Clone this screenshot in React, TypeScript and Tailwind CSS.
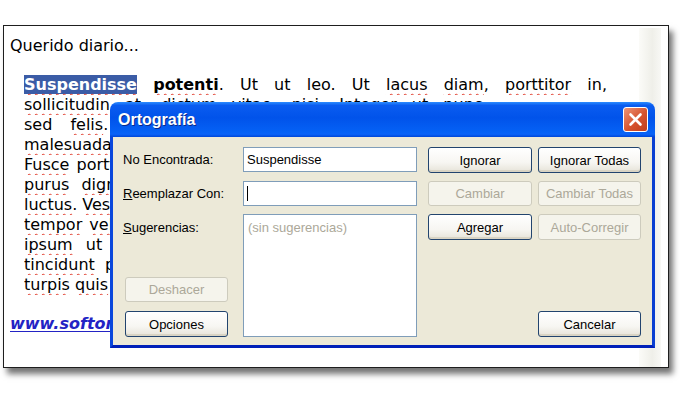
import React from "react";

const sq = "underline decoration-wavy decoration-[#e03a2a] decoration-1 underline-offset-[3px]";

function Line({
  children,
  justify = false,
  className = "",
}: {
  children: React.ReactNode;
  justify?: boolean;
  className?: string;
}) {
  return (
    <div
      className={
        "h-[20px] leading-[20px] overflow-hidden whitespace-nowrap " +
        (justify ? "text-justify [text-align-last:justify] whitespace-normal " : "") +
        className
      }
    >
      {children}
    </div>
  );
}

function XPButton({
  children,
  disabled = false,
  className = "",
}: {
  children: React.ReactNode;
  disabled?: boolean;
  className?: string;
}) {
  return (
    <div
      className={
        "flex items-center justify-center rounded-[3px] border text-[13px] leading-none " +
        (disabled
          ? "border-[#cdcbbd] bg-[#f5f4ec] text-[#aca899] "
          : "border-[#22446e] bg-[linear-gradient(#ffffff,#f7f6f2_60%,#e6e3d8)] text-black shadow-[inset_0_-2px_0_#d9d4c4,inset_0_1px_0_#ffffff] ") +
        className
      }
    >
      {children}
    </div>
  );
}

export default function App() {
  return (
    <div className="w-[680px] h-[399px] bg-white overflow-hidden pt-[25px] pl-[3px]">
      <div className="relative w-[666px] h-[343px] border border-[#1e1e1e] bg-white shadow-[4px_6px_6px_rgba(0,0,0,0.55)] flex">
        {/* document content */}
        <div
          className="flex-1 pt-[10px] text-[16px] text-black"
          style={{ fontFamily: '"DejaVu Sans", Verdana, sans-serif' }}
        >
          <div className="pl-[6px] h-[20px] leading-[20px]">Querido diario...</div>
          <div className="ml-[20px] w-[583px] mt-[19px]">
            <Line justify>
              <span className={"font-bold bg-[#3b5ca6] text-white " + sq}>Suspendisse</span>{" "}
              <span className={"font-bold " + sq}>potenti</span>. Ut ut leo. Ut{" "}
              <span className={sq}>lacus</span> <span className={sq}>diam</span>,{" "}
              <span className={sq}>porttitor</span> in,
            </Line>
            <Line className="[word-spacing:10px]">
              <span className={sq}>sollicitudin</span> at, dictum vitae, nisi. Integer ut nunc.
            </Line>
            <Line className="[word-spacing:13px]">
              sed <span className={sq}>felis</span>. Donec vel risus in purus.
            </Line>
            <Line>
              <span className={sq}>malesuada</span> erat vitae nisl. Nullam congue.
            </Line>
            <Line className="[word-spacing:2px]">
              <span className={sq}>Fusce</span> porttitor, nulla at vehicula.
            </Line>
            <Line className="[word-spacing:7px]">
              <span className={sq}>purus</span> <span className={sq}>dignissim</span> nunc, sed viverra.
            </Line>
            <Line>
              <span className={sq}>luctus</span>. <span className={sq}>Vestibulum</span> ante ipsum.
            </Line>
            <Line className="[word-spacing:2px]">
              <span className={sq}>tempor</span> <span className={sq}>vel</span>, pretium sed.
            </Line>
            <Line className="[word-spacing:8px]">
              <span className={sq}>ipsum</span> ut est aliquet condimentum.
            </Line>
            <Line className="[word-spacing:5px]">
              <span className={sq}>tincidunt</span> pharetra, eros lacus.
            </Line>
            <Line>
              <span className={sq}>turpis</span> <span className={sq}>quis</span> dolor.
            </Line>
          </div>
          <div className="pl-[6px] mt-[19px] h-[20px] leading-[20px]">
            <span className="font-bold italic text-[#2323c4] underline underline-offset-2">
              www.softonic.com
            </span>
          </div>
        </div>
        {/* faint scrollbar strip */}
        <div className="w-[22px] mt-[2px] bg-[linear-gradient(90deg,#fbfbf8,#efefe9_60%,#f8f8f5)]" />
        <div className="w-[7px]" />

        {/* Dialog window (overlay) */}
        <div
          className="absolute left-[106px] top-[76px] w-[545px] h-[246px] flex flex-col rounded-t-[8px] overflow-hidden"
          style={{ fontFamily: '"Liberation Sans", Arial, sans-serif' }}
        >
          {/* title bar */}
          <div className="h-[35px] flex items-center justify-between pl-[8px] pr-[7px] bg-[linear-gradient(#2b8cff_0%,#0a5cf0_10%,#0153ea_45%,#0561f5_85%,#0a63f8_92%,#0046d8_100%)]">
            <span className="text-white font-bold text-[16px] [text-shadow:1px_1px_0_#0a2a8a]">
              Ortografía
            </span>
            <div className="w-[25px] h-[25px] rounded-[3px] border border-white bg-[linear-gradient(135deg,#ec9476,#d6532f_55%,#c13e1c)] flex items-center justify-center">
              <svg width="15" height="15" viewBox="0 0 15 15">
                <path d="M2.5 2.5 L12.5 12.5 M12.5 2.5 L2.5 12.5" stroke="white" strokeWidth="2.6" strokeLinecap="round" />
              </svg>
            </div>
          </div>
          {/* body */}
          <div className="flex-1 border-l-[3px] border-r-[3px] border-b-[3px] border-l-[#0a47dc] border-r-[#0a3fd2] border-b-[#0020b8] bg-[#ece9d8] flex pt-[10px] pb-[8px] pl-[10px] pr-[11px] text-[13px] text-black">
            {/* labels column */}
            <div className="w-[120px] flex flex-col">
              <div className="h-[25px] flex items-center">No Encontrada:</div>
              <div className="h-[25px] mt-[9px] flex items-center">
                <span>
                  <span className="underline">R</span>eemplazar Con:
                </span>
              </div>
              <div className="mt-[12px]">
                <span className="underline">S</span>ugerencias:
              </div>
              <XPButton disabled className="mt-auto w-[103px] h-[25px] ml-[2px]">
                Deshacer
              </XPButton>
              <XPButton className="mt-[9px] w-[103px] h-[26px] ml-[2px]">Opciones</XPButton>
            </div>
            {/* fields column */}
            <div className="w-[174px] flex flex-col">
              <div className="h-[25px] border border-[#7f9db9] bg-white flex items-center px-[3px]">
                Suspendisse
              </div>
              <div className="h-[25px] mt-[9px] border border-[#7f9db9] bg-white flex items-center px-[3px]">
                <div className="w-px h-[15px] bg-black" />
              </div>
              <div className="flex-1 mt-[8px] border border-[#7f9db9] bg-white px-[4px] pt-[3px] text-[#aca899]">
                (sin sugerencias)
              </div>
            </div>
            {/* buttons */}
            <div className="ml-[11px] w-[213px] flex flex-col">
              <div className="grid grid-cols-[104px_103px] gap-x-[6px] gap-y-[8px]">
                <XPButton className="h-[26px]">Ignorar</XPButton>
                <XPButton className="h-[26px]">Ignorar Todas</XPButton>
                <XPButton disabled className="h-[25px]">Cambiar</XPButton>
                <XPButton disabled className="h-[25px]">Cambiar Todas</XPButton>
                <XPButton className="h-[26px]">Agregar</XPButton>
                <XPButton disabled className="h-[26px]">Auto-Corregir</XPButton>
              </div>
              <XPButton className="mt-auto ml-auto w-[103px] h-[26px]">Cancelar</XPButton>
            </div>
          </div>
        </div>
      </div>
    </div>
  );
}
